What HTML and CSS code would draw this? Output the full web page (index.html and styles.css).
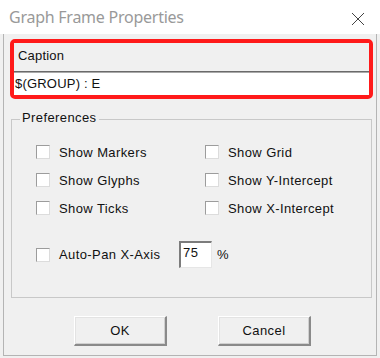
FILE: index.html
```html
<!DOCTYPE html>
<html>
<head>
<meta charset="utf-8">
<link rel="stylesheet" href="styles.css">
</head>
<body>
<div class="titlebar">
  <span class="title">Graph Frame Properties</span>
  <svg class="close" width="14" height="14" viewBox="0 0 14 14"><path d="M1 1 L13 13 M13 1 L1 13" stroke="#444" stroke-width="1" fill="none"/></svg>
</div>
<div class="client">
  <div class="caption-box">
    <div class="cap-label">Caption</div>
    <div class="cap-input">$(GROUP) : E</div>
  </div>
  <fieldset class="prefs">
    <legend>Preferences</legend>
    <div class="grid">
      <div class="opt"><span class="cb"></span><span>Show Markers</span></div>
      <div class="opt"><span class="cb"></span><span>Show Grid</span></div>
      <div class="opt"><span class="cb"></span><span>Show Glyphs</span></div>
      <div class="opt"><span class="cb"></span><span>Show Y-Intercept</span></div>
      <div class="opt"><span class="cb"></span><span>Show Ticks</span></div>
      <div class="opt"><span class="cb"></span><span>Show X-Intercept</span></div>
    </div>
    <div class="autopan">
      <span class="cb"></span><span class="ap-label">Auto-Pan X-Axis</span>
      <span class="num">75</span><span class="pct">%</span>
    </div>
  </fieldset>
  <div class="buttons">
    <div class="btn">OK</div>
    <div class="btn">Cancel</div>
  </div>
</div>
</body>
</html>
```
FILE: styles.css
```css
html, body {
  margin: 0;
  padding: 0;
}
body {
  width: 380px;
  height: 358px;
  background: #f0f0f0;
  font-family: "Liberation Sans", Arial, sans-serif;
  font-size: 13px;
  letter-spacing: 0.4px;
  color: #111;
  overflow: hidden;
}
.titlebar {
  height: 34px;
  background: #fff;
  display: flex;
  align-items: flex-start;
  justify-content: space-between;
}
.title {
  font-family: "Noto Sans", sans-serif;
  font-size: 16px;
  letter-spacing: -0.25px;
  color: #999;
  margin-left: 9px;
  line-height: 22px;
  margin-top: 6px;
}
.close {
  margin-top: 12px;
  margin-right: 15px;
}
.client {
  margin: 0 3px;
  height: 321px;
  border: 1px solid #b4b4b4;
  border-top: none;
  background: #f0f0f0;
  overflow: hidden;
}
.caption-box {
  margin: 5px 0 0 6px;
  width: 355px;
  border: 4px solid #ff1a1a;
  border-radius: 5px;
  letter-spacing: 0.2px;
}
.cap-label {
  height: 28px;
  line-height: 26px;
  padding-left: 4px;
  background: #f0f0f0;
}
.cap-input {
  border-top: 1px solid #6a6a6a;
  box-shadow: inset 0 1px 0 #a9a9a9;
  background: #fff;
  height: 23px;
  line-height: 23px;
  padding-left: 1px;
}
.prefs {
  margin: 12px 0 0 7px;
  width: 361px;
  box-sizing: border-box;
  border: 1px solid #c8c8c8;
  padding: 10px 0 29px 0;
}
.prefs legend {
  line-height: 14px;
  padding: 0 2px 3px 2px;
  margin-left: 8px;
}
.grid {
  display: grid;
  grid-template-columns: 169px 1fr;
  grid-auto-rows: 28px;
  margin-left: 24px;
}
.opt {
  display: flex;
  align-items: center;
}
.cb {
  width: 12px;
  height: 12px;
  background: #fff;
  border: 1px solid #9c9c9c;
  border-right-color: #dcdcdc;
  border-bottom-color: #dcdcdc;
  margin-right: 9px;
  flex: none;
}
.autopan {
  margin-top: 19px;
  margin-left: 24px;
  height: 27px;
  display: flex;
  align-items: center;
}
.ap-label {
  width: 120px;
}
.num {
  box-sizing: border-box;
  width: 33px;
  height: 27px;
  background: #fff;
  border-top: 2px solid #7c7c7c;
  border-left: 2px solid #7c7c7c;
  border-right: 1px solid #e6e6e6;
  border-bottom: 1px solid #e6e6e6;
  padding-left: 2px;
  line-height: 20px;
}
.pct {
  margin-left: 5px;
}
.buttons {
  display: flex;
  gap: 51px;
  padding-left: 70px;
  margin-top: 18px;
}
.btn {
  width: 93px;
  height: 30px;
  box-sizing: border-box;
  background: #f0f0f0;
  border-top: 1px solid #fff;
  border-left: 1px solid #fff;
  border-right: 2px solid #8a8a8a;
  border-bottom: 2px solid #8a8a8a;
  box-shadow: inset 1px 1px 0 #e3e3e3, inset -1px -1px 0 #d0d0d0;
  display: flex;
  align-items: center;
  justify-content: center;
}
```
